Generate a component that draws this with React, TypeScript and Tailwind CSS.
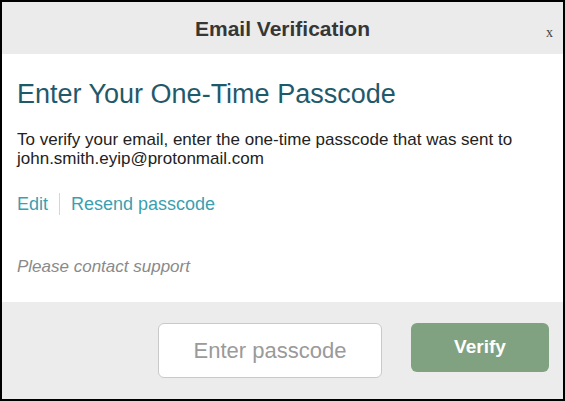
export default function App() {
  return (
    <div className="w-[565px] h-[401px] border-2 border-black bg-white flex flex-col font-['Liberation_Sans',Arial,sans-serif]">
      {/* Header */}
      <div className="h-[52px] shrink-0 bg-[#ebebeb] relative flex items-center justify-center">
        <h1 className="text-[21px] font-bold text-[#363636] pt-[2px]">Email Verification</h1>
        <span className="absolute right-[10px] top-[20px] text-[14px] text-[#444] font-['Liberation_Serif',serif]">x</span>
      </div>

      {/* Body */}
      <div className="flex-1 px-[15px] pt-[24px]">
        <h2 className="text-[27px] leading-[32px] text-[#1f5a6b]">Enter Your One-Time Passcode</h2>
        <p className="mt-[20px] text-[17px] leading-[19px] text-[#222]">
          To verify your email, enter the one-time passcode that was sent to
          <br />
          john.smith.eyip@protonmail.com
        </p>
        <div className="mt-[25px] h-[22px] flex items-center text-[18px] text-[#3b9fb1]">
          <span>Edit</span>
          <span className="mx-[11px] w-px h-[22px] bg-[#d5d5d5]" />
          <span>Resend passcode</span>
        </div>
        <p className="mt-[42px] text-[17px] leading-[20px] italic text-[#8a8a8a]">Please contact support</p>
      </div>

      {/* Footer */}
      <div className="h-[97px] shrink-0 bg-[#ececec] flex items-start pt-[21px] pl-[156px] gap-[29px]">
        <div className="w-[224px] h-[55px] rounded-[6px] border border-[#c9c9c9] bg-white flex items-center justify-center text-[22px] text-[#9a9a9a]">
          Enter passcode
        </div>
        <button className="w-[138px] h-[49px] rounded-[6px] bg-[#80a281] text-white text-[19px] font-bold">
          Verify
        </button>
      </div>
    </div>
  );
}
